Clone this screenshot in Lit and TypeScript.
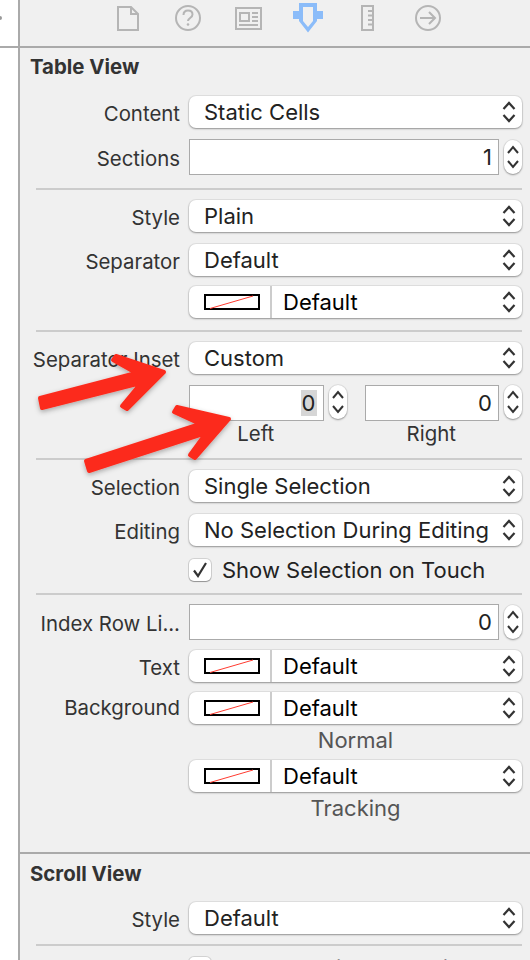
import { LitElement, html, css, svg } from "lit";
import { customElement } from "lit/decorators.js";

const updown = html`<svg class="ud" viewBox="0 0 14 24" width="14" height="24"><path d="M1.500 9 7 3l5.500 6M1.500 15 7 21l5.500-6" fill="none" stroke="#333" stroke-width="2.200"/></svg>`;
const swatch = html`<span class="swatchcell"><svg width="56" height="16" viewBox="0 0 56 16"><rect x="1" y="1" width="54" height="14" fill="#fff" stroke="#000" stroke-width="2"/><path d="M6 14.500 49 2" stroke="#ff3b30" stroke-width="1"/></svg></span>`;
const stepper = html`<div class="step"><svg width="14" height="28" viewBox="0 0 14 28"><path d="M2 10 7 4l5 6M2 18l5 6 5-6" fill="none" stroke="#333" stroke-width="2"/></svg></div>`;

@customElement("app-root")
export class AppRoot extends LitElement {
  static styles = css`
    :host { display: block; width: 530px; height: 960px; overflow: hidden; position: relative; background: #f0f0f0; font-family: Inter, Roboto, "Liberation Sans", sans-serif; color: #222; }
    .page { display: flex; height: 960px; }
    .gutter { width: 18px; flex: none; background: #fff; position: relative; border-right: 2px solid #aaa; }
    .dot { position: absolute; left: -2px; top: 16px; width: 4px; height: 4px; border-radius: 2px; background: #999; }
    .gutterline { height: 46px; border-bottom: 2px solid #aaa; }
    .main { flex: 1; min-width: 0; }
    .tabs { height: 46px; display: flex; align-items: flex-start; border-bottom: 2px solid #aaa; }
    .tabs svg { flex: none; display: block; }
    .i-file { margin: 6px 0 0 97px; }
    .i-help { margin: 4px 0 0 35px; }
    .i-news { margin: 7px 0 0 33px; }
    .i-size { margin: 3px 0 0 30px; }
    .i-rule { margin: 5px 0 0 38px; }
    .i-go { margin: 4px 0 0 40px; }
    .sec { padding-left: 10px; padding-right: 8px; padding-top: 7px; }
    .sec.second { padding-top: 8px; }
    .title { font-weight: 700; font-size: 20.400px; line-height: 24px; color: #333; }
    .row { display: flex; align-items: center; }
    .lab { width: 159px; flex: none; text-align: right; font-size: 20.400px; color: #333; padding: 2px 9px 0 0; box-sizing: border-box; white-space: nowrap; }
    .lab.up { padding-top: 0; padding-bottom: 2px; }
    .select { flex: 1; height: 32px; background: #fff; border-radius: 7px; box-shadow: 0 1px 2px rgba(0,0,0,.35), 0 0 0 1px rgba(0,0,0,.06); display: flex; align-items: center; font-size: 22px; color: #222; min-width: 0; }
    .select .txt { flex: 1; padding-left: 15px; white-space: nowrap; }
    .ud { margin-right: 6px; flex: none; }
    .swatchcell { width: 66px; padding-left: 15px; height: 100%; flex: none; display: flex; align-items: center; border-right: 2px solid #ccc; }
    .select .after { padding-left: 11px; color: #000; }
    .input { flex: 1; min-width: 0; height: 34px; background: #fff; border: 1px solid #aaa; display: flex; align-items: center; justify-content: flex-end; padding-right: 6px; font-size: 22px; color: #222; }
    .input .sel { background: #d6d6d6; padding: 0 1px; }
    .step { width: 18px; height: 34px; flex: none; margin-left: 5px; border-radius: 9px; background: #fff; box-shadow: 0 1px 2px rgba(0,0,0,.35), 0 0 0 1px rgba(0,0,0,.06); display: flex; align-items: center; justify-content: center; }
    .step svg { display: block; }
    .hr { height: 2px; background: #ccc; margin-left: 6px; }
    .pair { flex: 1; display: flex; gap: 18px; min-width: 0; }
    .pair > div { flex: 1; min-width: 0; }
    .pairinner { display: flex; }
    .cap { text-align: center; font-size: 20.400px; line-height: 24px; color: #333; padding-right: 24px; }
    .state { text-align: center; font-size: 22px; line-height: 24px; color: #555; padding-left: 159px; }
    .chk { display: flex; align-items: center; font-size: 22px; color: #222; white-space: nowrap; }
    .box { width: 22px; height: 22px; border-radius: 5px; background: #fff; box-shadow: 0 1px 1px rgba(0,0,0,.3), 0 0 0 1px rgba(0,0,0,.12); margin-right: 11px; display: flex; align-items: center; justify-content: center; }
    .sectionline { height: 2px; background: #aaa; margin-top: 32px; }
    .m1 { margin-top: 1px; }
    .m4 { margin-top: 4px; }
    .m8 { margin-top: 8px; }
    .m9 { margin-top: 9px; }
    .m10 { margin-top: 10px; }
    .m11 { margin-top: 11px; }
    .m12 { margin-top: 12px; }
    .m13 { margin-top: 13px; }
    .m16 { margin-top: 16px; }
    .m17 { margin-top: 17px; }
    .arrows { position: absolute; left: 0; top: 0; pointer-events: none; }
  `;

  private sel(label: string, text: string, m: string) {
    return html`<div class="row ${m}"><div class="lab">${label}</div><div class="select"><span class="txt">${text}</span>${updown}</div></div>`;
  }
  private csel(label: string, m: string, up = false) {
    return html`<div class="row ${m}"><div class="lab ${up ? "up" : ""}">${label}</div><div class="select">${swatch}<span class="txt after">Default</span>${updown}</div></div>`;
  }

  render() {
    return html`
      <div class="page">
        <div class="gutter"><div class="dot"></div><div class="gutterline"></div></div>
        <div class="main">
          <div class="tabs">
            <svg class="i-file" width="22" height="25" viewBox="0 0 22 25"><path d="M1 1h13l7 7v16H1zM14 1v7h7" fill="none" stroke="#b5b5b5" stroke-width="2"/></svg>
            <svg class="i-help" width="28" height="28" viewBox="0 0 28 28"><circle cx="14" cy="14" r="12" fill="none" stroke="#b5b5b5" stroke-width="2"/><path d="M9.500 11c0-3 2-4.500 4.500-4.500s4.500 1.500 4.500 4c0 3.500-4.500 3.500-4.500 6.500" fill="none" stroke="#b5b5b5" stroke-width="2"/><circle cx="14" cy="20.500" r="1.300" fill="#b5b5b5"/></svg>
            <svg class="i-news" width="28" height="23" viewBox="0 0 28 23"><path fill="none" stroke="#b5b5b5" stroke-width="2" d="M1 1h25v21H1zM5 6h9v8H5zM4 18h19M17 6h6M17 10h6M17 14h6"/></svg>
            <svg class="i-size" width="30" height="30" viewBox="0 0 30 30"><path fill-rule="evenodd" d="M6 0h18v8h6v8h-6v2l-9 11.500L6 18v-2H0V8h6zM10 4v14l5 6 5-6V4z" fill="#8bbcf9"/></svg>
            <svg class="i-rule" width="13" height="26" viewBox="0 0 13 26"><path d="M1 1h11v24H1z" fill="none" stroke="#b5b5b5" stroke-width="2"/><path d="M7 6h5M7 10.500h5M7 15h5M7 19.500h5" stroke="#b5b5b5" stroke-width="2"/></svg>
            <svg class="i-go" width="28" height="28" viewBox="0 0 28 28"><circle cx="14" cy="14" r="12" fill="none" stroke="#b5b5b5" stroke-width="2"/><path d="M6 14h15M15 8l6 6-6 6" fill="none" stroke="#b5b5b5" stroke-width="2"/></svg>
          </div>

          <div class="sec">
            <div class="title">Table View</div>
            ${this.sel("Content", "Static Cells", "m17")}
            <div class="row m11"><div class="lab">Sections</div><div class="input">1</div>${stepper}</div>
            <div class="hr m13"></div>
            ${this.sel("Style", "Plain", "m10")}
            ${this.sel("Separator", "Default", "m12")}
            ${this.csel("", "m10")}
            <div class="hr m12"></div>
            ${this.sel("Separator Inset", "Custom", "m10")}
            <div class="row m11"><div class="lab"></div>
              <div class="pair">
                <div class="pairinner"><div class="input"><span class="sel">0</span></div>${stepper}</div>
                <div class="pairinner"><div class="input">0</div>${stepper}</div>
              </div>
            </div>
            <div class="row m1"><div class="lab"></div>
              <div class="pair"><div class="cap">Left</div><div class="cap">Right</div></div>
            </div>
            <div class="hr m12"></div>
            ${this.sel("Selection", "Single Selection", "m10")}
            ${this.sel("Editing", "No Selection During Editing", "m12")}
            <div class="row m11"><div class="lab"></div><div class="chk"><span class="box"><svg width="18" height="18" viewBox="0 0 18 18"><path d="M3 9.500 7 15 15 2" fill="none" stroke="#333" stroke-width="2.200"/></svg></span>Show Selection on Touch</div></div>
            <div class="hr m10"></div>
            <div class="row m9"><div class="lab">Index Row Li...</div><div class="input">0</div>${stepper}</div>
            ${this.csel("Text", "m10")}
            ${this.csel("Background", "m10", true)}
            <div class="state m4">Normal</div>
            ${this.csel("", "m8")}
            <div class="state m4">Tracking</div>
          </div>
          <div class="sectionline"></div>
          <div class="sec second">
            <div class="title">Scroll View</div>
            ${this.sel("Style", "Default", "m16")}
            <div class="hr m10"></div>
            <div class="row m9"><div class="lab"></div><div class="chk"><span class="box"></span>Shows Horizontal Indicator</div></div>
          </div>
        </div>
      </div>
      <svg class="arrows" width="530" height="960" viewBox="0 0 530 960">
        <defs><filter id="s" x="-20%" y="-20%" width="140%" height="140%"><feDropShadow dx="0" dy="2" stdDeviation="2.500" flood-color="#000" flood-opacity=".3"/></filter></defs>
        ${svg`<g filter="url(#s)" fill="#fc2c1e" stroke="#fc2c1e" stroke-width="4" stroke-linejoin="round">
          <path d="M40 398 136 373 113 360 116 356 164 372 127 409 122 406 141 383 42 408Z"/>
          <path d="M86 461 200 424 174 412 177 407 229 419 195 458 190 455 206 433 89 471Z"/>
        </g>`}
      </svg>
    `;
  }
}
